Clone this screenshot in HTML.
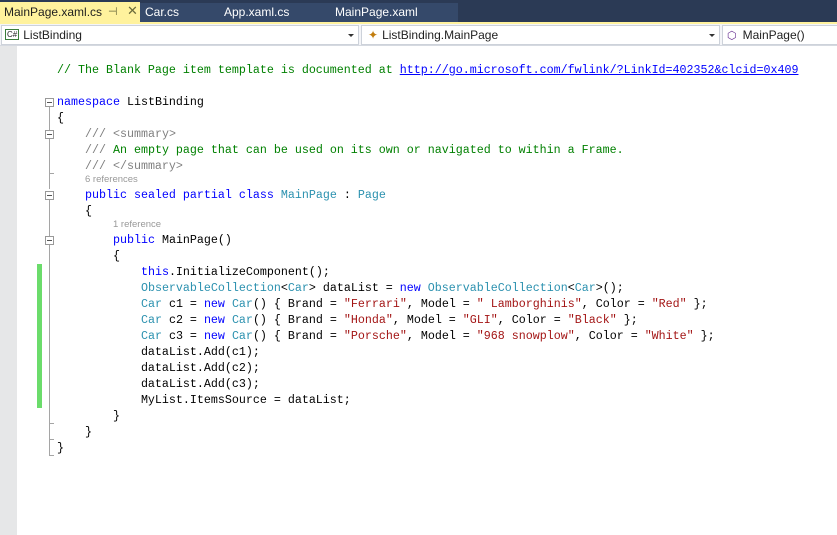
<!DOCTYPE html>
<html><head><style>
body{margin:0;width:837px;height:535px;overflow:hidden;background:#fff;position:relative;font-family:"Liberation Sans",sans-serif}
.tabbar{position:absolute;left:0;top:0;width:837px;height:22px;background:#2b3a55}
.inact{position:absolute;left:140px;top:3px;width:318px;height:19px;background:#35496a}
.tab{position:absolute;top:5px;font-size:12px;color:#fff}
.act{position:absolute;left:0;top:2px;width:140px;height:20px;background:#fff29d}
.yl{position:absolute;left:0;top:22px;width:837px;height:2px;background:#fff29d}
.tb{position:absolute;left:0;top:24px;width:837px;height:21px;background:#f4f5f8;border-bottom:1px solid #d5d9e0}
.combo{position:absolute;top:25px;height:18px;background:#fff;border:1px solid #cdd2da;font-size:12px;color:#1e1e1e;line-height:18px}
.arr{position:absolute;right:4px;top:8px;width:0;height:0;border-left:3px solid transparent;border-right:3px solid transparent;border-top:3px solid #333}
.margin{position:absolute;left:0;top:46px;width:17px;height:489px;background:#e6e7e8}
.code{position:absolute;font-family:"Liberation Mono",monospace;font-size:11.67px;white-space:pre;line-height:16px;color:#000}
.cl{position:absolute;font-size:9.5px;color:#999;white-space:pre}
.k{color:#0000ff}.t{color:#2b91af}.s{color:#a31515}.c{color:#008000}.g{color:#808080}
.box{position:absolute;left:45px;width:7px;height:7px;border:1px solid #999;background:#fff}
.box:after{content:"";position:absolute;left:1px;top:3px;width:5px;height:1px;background:#555}
.vl{position:absolute;left:49px;width:1px;background:#a5a5a5}
.hl{position:absolute;left:49px;height:1px;width:5px;background:#a5a5a5}
</style></head><body>
<div class="tabbar"></div>
<div class="inact"></div>
<div class="act"></div>
<div class="tab" style="left:4px;color:#1e1e1e">MainPage.xaml.cs</div>
<div class="tab" style="left:108px;color:#6a6a3a;font-size:11px;top:5px">⊣</div>
<div class="tab" style="left:127px;color:#6a6a3a;top:3px;font-size:13px">✕</div>
<div class="tab" style="left:145px">Car.cs</div>
<div class="tab" style="left:224px">App.xaml.cs</div>
<div class="tab" style="left:335px">MainPage.xaml</div>
<div class="yl"></div>
<div class="tb"></div>
<div class="combo" style="left:1px;width:356px"><span style="display:inline-block;margin:0 4px 0 3px;font-size:8px;border:1px solid #3a7d3a;color:#1e1e1e;line-height:9px;padding:0 1px;vertical-align:2px">C#</span>ListBinding<div class="arr"></div></div>
<div class="combo" style="left:361px;width:357px"><span style="color:#c27d0e;margin:0 4px 0 6px">✦</span>ListBinding.MainPage<div class="arr"></div></div>
<div class="combo" style="left:722px;width:120px"><span style="color:#652d90;margin:0 6px 0 4px;font-size:11px">⬡</span>MainPage()</div>
<div class="margin"></div>
<div style="position:absolute;left:37px;top:264px;width:5px;height:144px;background:#6bdc6b"></div>
<div class="vl" style="top:106px;height:83px"></div>
<div class="vl" style="top:199px;height:256px"></div>
<div class="hl" style="top:173px"></div>
<div class="hl" style="top:423px"></div>
<div class="hl" style="top:439px"></div>
<div class="hl" style="top:455px"></div>
<div class="box" style="top:98px"></div>
<div class="box" style="top:130px"></div>
<div class="box" style="top:191px"></div>
<div class="box" style="top:236px"></div>
<div class="code" style="left:57px;top:62px"><span class="c">// The Blank Page item template is documented at <span style="color:#0000ff;text-decoration:underline">http://go.microsoft.com/fwlink/?LinkId=402352&amp;clcid=0x409</span></span></div>
<div class="code" style="left:57px;top:94px"><span class="k">namespace</span> ListBinding
{
    <span class="g">///</span> <span class="g">&lt;summary&gt;</span>
    <span class="g">///</span><span class="c"> An empty page that can be used on its own or navigated to within a Frame.</span>
    <span class="g">/// &lt;/summary&gt;</span></div>
<div class="cl" style="left:85px;top:174px">6 references</div>
<div class="code" style="left:57px;top:187px">    <span class="k">public sealed partial class</span> <span class="t">MainPage</span> : <span class="t">Page</span>
    {</div>
<div class="cl" style="left:113px;top:219px">1 reference</div>
<div class="code" style="left:57px;top:232px">        <span class="k">public</span> MainPage()
        {
            <span class="k">this</span>.InitializeComponent();
            <span class="t">ObservableCollection</span>&lt;<span class="t">Car</span>&gt; dataList = <span class="k">new</span> <span class="t">ObservableCollection</span>&lt;<span class="t">Car</span>&gt;();
            <span class="t">Car</span> c1 = <span class="k">new</span> <span class="t">Car</span>() { Brand = <span class="s">"Ferrari"</span>, Model = <span class="s">" Lamborghinis"</span>, Color = <span class="s">"Red"</span> };
            <span class="t">Car</span> c2 = <span class="k">new</span> <span class="t">Car</span>() { Brand = <span class="s">"Honda"</span>, Model = <span class="s">"GLI"</span>, Color = <span class="s">"Black"</span> };
            <span class="t">Car</span> c3 = <span class="k">new</span> <span class="t">Car</span>() { Brand = <span class="s">"Porsche"</span>, Model = <span class="s">"968 snowplow"</span>, Color = <span class="s">"White"</span> };
            dataList.Add(c1);
            dataList.Add(c2);
            dataList.Add(c3);
            MyList.ItemsSource = dataList;
        }
    }
}</div>
</body></html>
